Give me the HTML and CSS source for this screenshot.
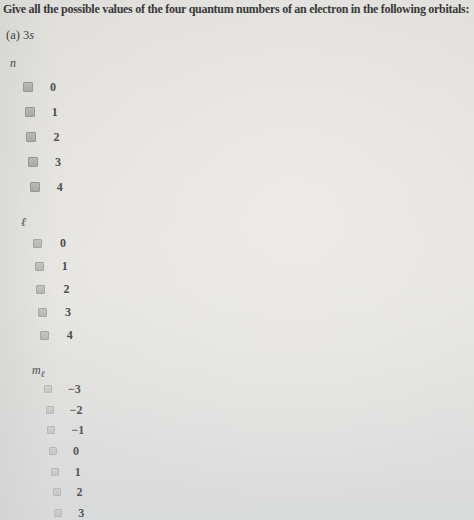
FILE: index.html
```html
<!DOCTYPE html>
<html lang="en">
<head>
<meta charset="utf-8">
<title>Quantum numbers</title>
<link rel="stylesheet" href="styles.css">
</head>
<body>
<div class="page">
  <p class="question">Give all the possible values of the four quantum numbers of an electron in the following orbitals:</p>
  <p class="part">(a) 3<i>s</i></p>

  <p class="var var-n"><i>n</i></p>
  <ul class="opts opts-n">
    <li class="row"><span class="cb"></span><span class="lbl">0</span></li>
    <li class="row"><span class="cb"></span><span class="lbl">1</span></li>
    <li class="row"><span class="cb"></span><span class="lbl">2</span></li>
    <li class="row"><span class="cb"></span><span class="lbl">3</span></li>
    <li class="row"><span class="cb"></span><span class="lbl">4</span></li>
  </ul>

  <p class="var var-l"><i>ℓ</i></p>
  <ul class="opts opts-l">
    <li class="row"><span class="cb"></span><span class="lbl">0</span></li>
    <li class="row"><span class="cb"></span><span class="lbl">1</span></li>
    <li class="row"><span class="cb"></span><span class="lbl">2</span></li>
    <li class="row"><span class="cb"></span><span class="lbl">3</span></li>
    <li class="row"><span class="cb"></span><span class="lbl">4</span></li>
  </ul>

  <p class="var var-ml"><i>m</i><sub><i>ℓ</i></sub></p>
  <ul class="opts opts-ml">
    <li class="row"><span class="cb"></span><span class="lbl">−3</span></li>
    <li class="row"><span class="cb"></span><span class="lbl">−2</span></li>
    <li class="row"><span class="cb"></span><span class="lbl">−1</span></li>
    <li class="row"><span class="cb"></span><span class="lbl">0</span></li>
    <li class="row"><span class="cb"></span><span class="lbl">1</span></li>
    <li class="row"><span class="cb"></span><span class="lbl">2</span></li>
    <li class="row"><span class="cb"></span><span class="lbl">3</span></li>
  </ul>
</div>
</body>
</html>
```

FILE: styles.css
```css
html, body {
  margin: 0;
  padding: 0;
  height: 100%;
}

body {
  background:
    radial-gradient(ellipse 70% 55% at 62% 42%, #ecebe8 0%, rgba(236,235,232,0) 100%),
    linear-gradient(180deg, #e0dfdc 0%, #e5e4e1 55%, #d9dadb 100%);
  font-family: "Liberation Serif", "Times New Roman", serif;
  color: #3c3c3c;
  overflow: hidden;
}

.page {
  position: relative;
  height: 520px;
  background: linear-gradient(90deg, rgba(200,200,198,0.35) 0%, rgba(200,200,198,0) 12%);
}

p {
  margin: 0;
}

.question {
  padding: 2px 0 0 3px;
  font-size: 12px;
  line-height: 14px;
  font-weight: bold;
  white-space: nowrap;
  letter-spacing: -0.28px;
  color: #383838;
}

.part {
  margin-top: 12px;
  padding-left: 6px;
  font-size: 12.5px;
  line-height: 14px;
  color: #3c3c3c;
}

.var {
  font-size: 12px;
  line-height: 14px;
  color: #4a4a4a;
}

.var-n { margin-top: 14px; padding-left: 10px; }
.var-l { margin-top: 16px; padding-left: 21px; }
.var-ml { margin-top: 16px; padding-left: 32px; }

.var sub {
  font-size: 9px;
  line-height: 0;
  vertical-align: -3px;
}

.opts {
  list-style: none;
  margin: 0;
  padding: 0;
}

.opts-n { margin-top: 4px; --x0: 23px; --dx: 1.7px; --gap: 17px; --h: 25px; --box: 10px; }
.opts-l { margin-top: 2.5px; --x0: 33px; --dx: 1.7px; --gap: 18px; --h: 23px; --box: 9px; }
.opts-ml { margin-top: 2.5px; --x0: 44px; --dx: 1.7px; --gap: 16px; --h: 20.6px; --box: 8px; }

.row {
  --i: 0;
  display: flex;
  align-items: center;
  height: var(--h);
  margin-left: calc(var(--x0) + var(--i) * var(--dx));
  font-size: 12px;
  font-weight: bold;
  color: #4e4e4e;
}

.opts-ml .row {
  color: #565656;
}

.row:nth-child(2) { --i: 1; }
.row:nth-child(3) { --i: 2; }
.row:nth-child(4) { --i: 3; }
.row:nth-child(5) { --i: 4; }
.row:nth-child(6) { --i: 5; }
.row:nth-child(7) { --i: 6; }

.cb {
  flex: none;
  box-sizing: border-box;
  width: var(--box);
  height: var(--box);
  margin-right: var(--gap);
  border: 1px solid #979795;
  border-radius: 1px;
  background: linear-gradient(180deg, #b9b9b7, #a9a9a7);
}

.opts-l .cb {
  border-color: #a5a5a3;
  background: linear-gradient(180deg, #c3c3c1, #b6b6b4);
}

.opts-ml .cb {
  border-color: #b9b9b8;
  background: linear-gradient(180deg, #d0d0cf, #c6c6c5);
}

.lbl {
  line-height: 14px;
}
```
